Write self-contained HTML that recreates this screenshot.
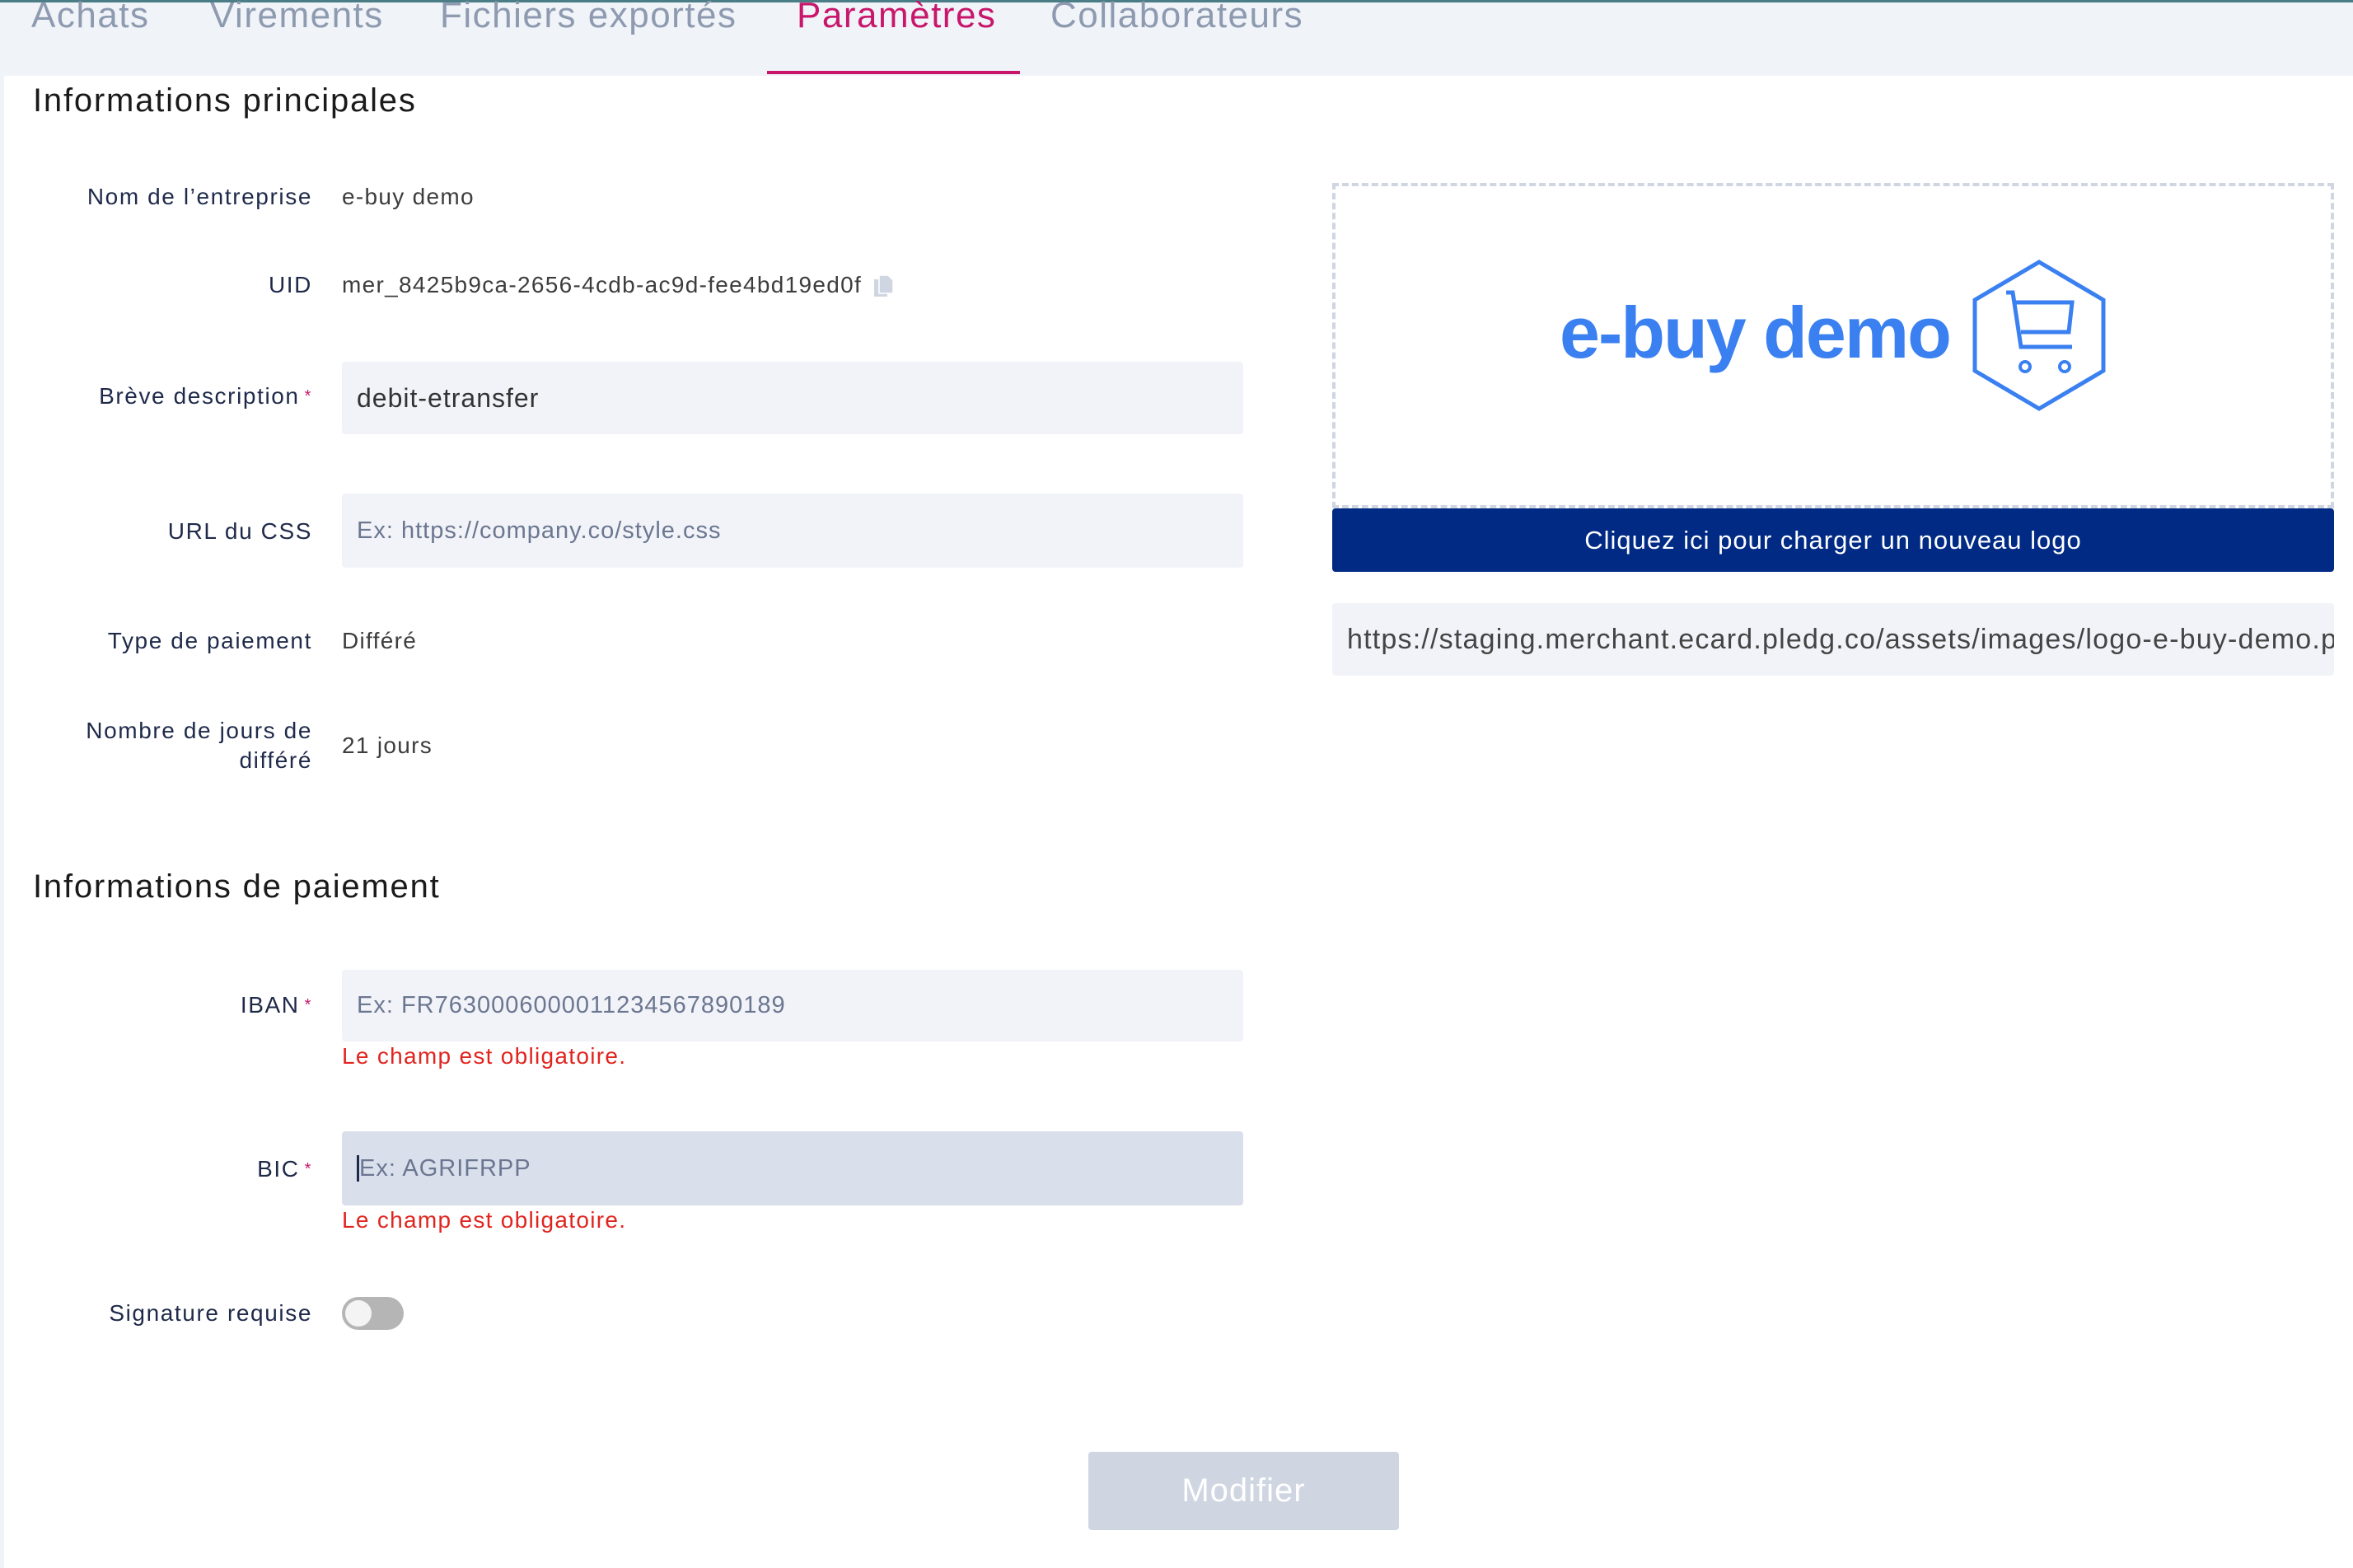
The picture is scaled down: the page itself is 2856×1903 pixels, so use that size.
<!DOCTYPE html>
<html><head><meta charset="utf-8"><style>
*{margin:0;padding:0;box-sizing:border-box}
body{width:2856px;height:1903px;position:relative;overflow:hidden;background:#fff;font-family:"Liberation Sans",sans-serif}
.a{position:absolute;white-space:nowrap}
.lab{position:absolute;right:2477px;color:#1f2a4a;font-size:28px;line-height:36px;text-align:right;letter-spacing:1.6px}
.val{position:absolute;left:415px;color:#3d3d3d;font-size:28px;line-height:36px;letter-spacing:1.3px}
.inp{position:absolute;left:415px;width:1094px;background:#f1f3f8;border-radius:4px;font-size:29px;color:#6b7690;padding-left:18px;letter-spacing:1px;white-space:nowrap}
.req{color:#c8176b;font-size:20px;vertical-align:top;margin-left:6px}
.tab{position:absolute;top:-6px;font-size:44px;line-height:50px;color:#8d9ab0;letter-spacing:1.5px}
.err{position:absolute;left:415px;color:#e0251f;font-size:28px;line-height:36px;letter-spacing:1.3px}
</style></head><body>
<div class="a" style="left:0;top:0;width:2856px;height:92px;background:#f0f3f8"></div>
<div class="a" style="left:0;top:0;width:2856px;height:3px;background:#4a7d85"></div>
<div class="a" style="left:0;top:92px;width:5px;height:1811px;background:#f0f3f8"></div>
<div class="tab" style="left:38px">Achats</div>
<div class="tab" style="left:255px">Virements</div>
<div class="tab" style="left:534px">Fichiers exportés</div>
<div class="tab" style="left:967px;color:#c8176b">Paramètres</div>
<div class="tab" style="left:1275px">Collaborateurs</div>
<div class="a" style="left:931px;top:86px;width:307px;height:4px;background:#c8176b"></div>

<div class="a" style="left:40px;top:98px;font-size:40px;line-height:48px;color:#1a1a1a;letter-spacing:1.8px">Informations principales</div>
<div class="lab" style="top:221px">Nom de l’entreprise</div><div class="val" style="top:221px">e-buy demo</div>
<div class="lab" style="top:328px">UID</div><div class="val" style="top:328px">mer_8425b9ca-2656-4cdb-ac9d-fee4bd19ed0f</div>
<svg class="a" style="left:1060px;top:333px" width="26" height="28" viewBox="0 0 26 28"><rect x="1" y="6" width="16" height="21" fill="#cfd6e2"/><path d="M7 1h11l6 6v16H7z" fill="#cfd6e2" stroke="#fff" stroke-width="1.5"/></svg>
<div class="lab" style="top:463px">Brève description<span class="req">*</span></div>
<div class="inp" style="top:439px;height:88px;line-height:88px;color:#333;font-size:32px">debit-etransfer</div>
<div class="lab" style="top:627px">URL du CSS</div>
<div class="inp" style="top:599px;height:90px;line-height:90px">Ex: https://company.co/style.css</div>
<div class="lab" style="top:760px">Type de paiement</div><div class="val" style="top:760px">Différé</div>
<div class="lab" style="top:869px">Nombre de jours de<br>différé</div><div class="val" style="top:887px">21 jours</div>

<div class="a" style="left:40px;top:1052px;font-size:40px;line-height:48px;color:#1a1a1a;letter-spacing:1.8px">Informations de paiement</div>
<div class="lab" style="top:1202px">IBAN<span class="req">*</span></div>
<div class="inp" style="top:1177px;height:87px;line-height:87px">Ex: FR7630006000011234567890189</div>
<div class="err" style="top:1264px">Le champ est obligatoire.</div>
<div class="lab" style="top:1401px">BIC<span class="req">*</span></div>
<div class="inp" style="top:1373px;height:90px;line-height:90px;background:#d9e0ec"><span style="border-left:3px solid #1f2a4a">Ex: AGRIFRPP</span></div>
<div class="err" style="top:1463px">Le champ est obligatoire.</div>
<div class="lab" style="top:1576px">Signature requise</div>
<div class="a" style="left:415px;top:1574px;width:75px;height:40px;border-radius:20px;background:#b5b5b5"></div>
<div class="a" style="left:419px;top:1578px;width:32px;height:32px;border-radius:50%;background:#f4f4f4"></div>

<div class="a" style="left:1321px;top:1762px;width:377px;height:95px;background:#cfd6e2;border-radius:4px;color:#fff;font-size:40px;line-height:95px;text-align:center;letter-spacing:1px">Modifier</div>

<div class="a" style="left:1617px;top:222px;width:1216px;height:395px;border:4px dashed #cfd6e2"></div>
<div class="a" style="left:1893px;top:352px;font-size:88px;line-height:104px;font-weight:bold;color:#3b80f0;letter-spacing:-2px">e-buy demo</div>
<svg class="a" style="left:2393px;top:315px" width="164" height="184" viewBox="0 0 164 184"><path d="M82 3L160 49V135L82 181L4 135V49Z" fill="none" stroke="#3b80f0" stroke-width="5"/><path d="M42 40h8l10 66h62M54 52h68l-4 36H60" fill="none" stroke="#3b80f0" stroke-width="5"/><circle cx="65" cy="130" r="6" fill="none" stroke="#3b80f0" stroke-width="4"/><circle cx="113" cy="130" r="6" fill="none" stroke="#3b80f0" stroke-width="4"/></svg>
<div class="a" style="left:1617px;top:617px;width:1216px;height:77px;background:#002a84;border-radius:4px;color:#fff;font-size:31px;line-height:77px;text-align:center;letter-spacing:1px">Cliquez ici pour charger un nouveau logo</div>
<div class="a" style="left:1617px;top:732px;width:1216px;height:88px;background:#f1f3f8;border-radius:4px;color:#444;font-size:34px;line-height:88px;padding:0 18px;overflow:hidden;letter-spacing:1.2px">https://staging.merchant.ecard.pledg.co/assets/images/logo-e-buy-demo.png</div>
</body></html>
